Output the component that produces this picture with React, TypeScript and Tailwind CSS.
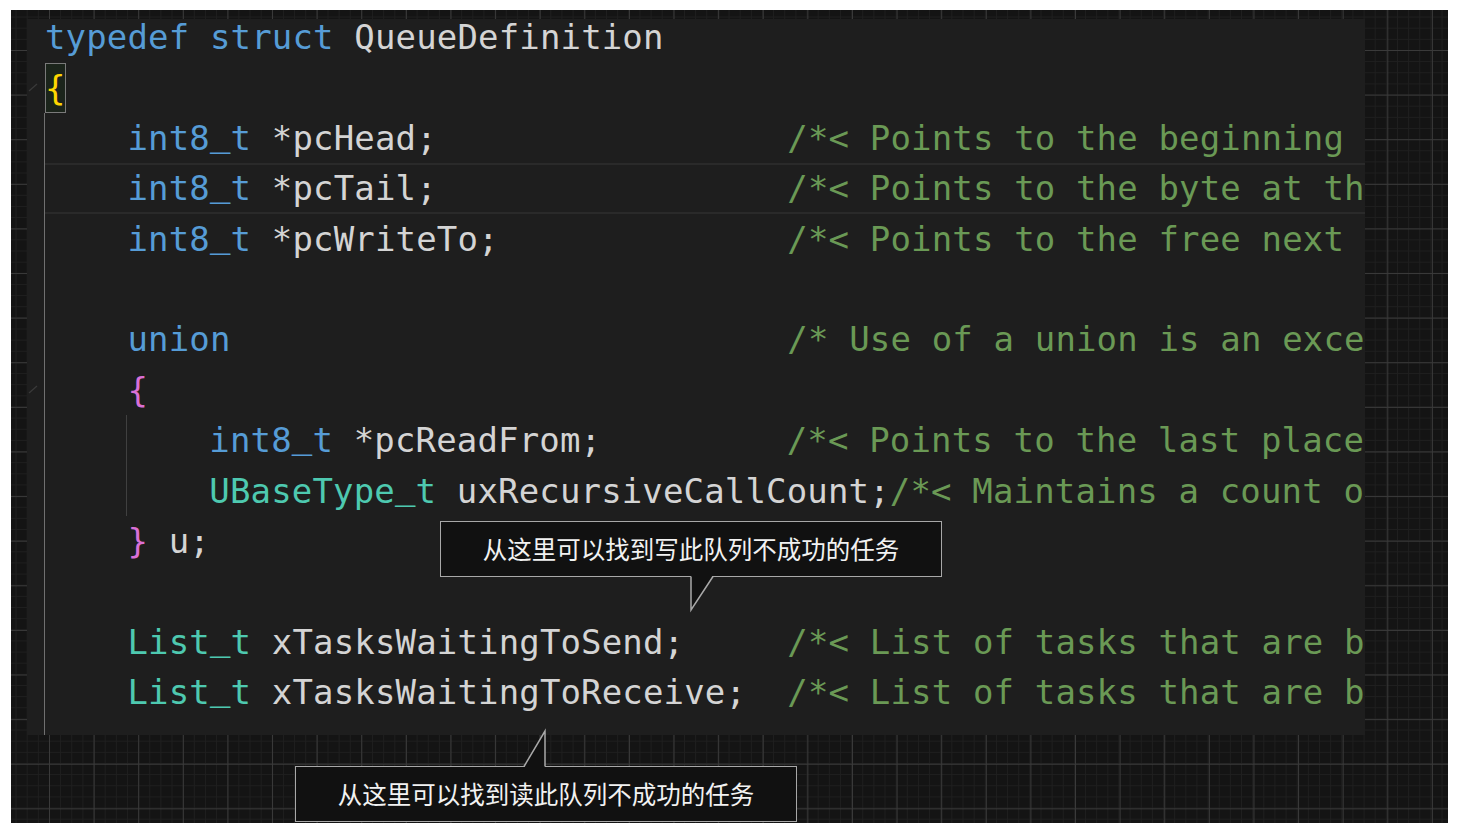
import React from "react";

type Tok = [string, string];

const KW = "text-[#569cd6]";
const TY = "text-[#4ec9b0]";
const ID = "text-[#d4d4d4]";
const CM = "text-[#6a9955]";
const PK = "text-[#da70d6]";

const pad = (s: string, col: number) => s.padEnd(col, " ");

const field = (indent: number, type: string, typeCls: string, rest: string, comment: string, col = 36): Tok[] => {
  const head = " ".repeat(indent);
  const code = head + type + rest;
  const gap = Math.max(0, col - code.length);
  return [
    [head, ID],
    [type, typeCls],
    [rest + " ".repeat(gap), ID],
    [comment, CM],
  ];
};

function Word({ text }: { text: string }) {
  const parts = text.split("_");
  return (
    <>
      {parts.map((p, i) => (
        <React.Fragment key={i}>
          {i > 0 && <span className="font-['Liberation_Mono',monospace] text-[34.1px]">_</span>}
          {p}
        </React.Fragment>
      ))}
    </>
  );
}

function Line({ toks, box = "h-[50.4px] leading-[50.4px]" }: { toks: Tok[]; box?: string }) {
  return (
    <div className={`whitespace-pre ${box}`}>
      {toks.map(([t, c], i) => (
        <span key={i} className={c}>
          <Word text={t} />
        </span>
      ))}
    </div>
  );
}

function FoldMark() {
  return (
    <svg width="10" height="9" viewBox="0 0 10 9" className="ml-[1px]">
      <path d="M1 8 L9 1" stroke="#3a3a3a" strokeWidth="1.2" fill="none" />
    </svg>
  );
}

function CodePanel() {
  return (
    <div className="ml-[16px] mt-[9px] h-[716px] w-[1338px] overflow-hidden bg-[#1e1e1e]">
      <div className="flex h-[716px] font-['DejaVu_Sans_Mono',monospace] text-[34px] tracking-[0.15px]">
        {/* gutter */}
        <div className="flex w-[18px] shrink-0 flex-col">
          <div className="h-[43.4px]" />
          <div className="flex h-[50.4px] items-center">
            <FoldMark />
          </div>
          <div className="h-[252px]" />
          <div className="flex h-[50.4px] items-center">
            <FoldMark />
          </div>
        </div>

        <div className="flex flex-1 flex-col">
          <Line
            box="h-[43.4px] leading-[36px]"
            toks={[
              ["typedef", KW],
              [" ", ID],
              ["struct", KW],
              [" ", ID],
              ["QueueDefinition", ID],
            ]}
          />
          <div className="flex h-[50.4px] items-center">
            <span className="flex h-[50px] w-[20.6px] items-center justify-center border border-[#7a7a7a] bg-[#1b241b] leading-[48px] text-[#ffd700]">
              {"{"}
            </span>
          </div>

          <div className="-ml-px flex flex-1 flex-col border-l border-[#707070]">
            <Line toks={field(4, "int8_t", KW, " *pcHead;", "/*< Points to the beginning of the queue storage area. */")} />
            <Line
              box="h-[50.4px] leading-[46.4px] border-y-2 border-[#2a2a2a]"
              toks={field(4, "int8_t", KW, " *pcTail;", "/*< Points to the byte at the end of the queue storage area. */")}
            />
            <Line toks={field(4, "int8_t", KW, " *pcWriteTo;", "/*< Points to the free next place in the storage area. */")} />
            <Line toks={[[" ", ID]]} />
            <Line
              toks={[
                [pad("    ", 4), ID],
                [pad("union", 32), KW],
                ["/* Use of a union is an exception to the coding standard to ensure two mutually exclusive structure members don't appear simultaneously. */", CM],
              ]}
            />
            <Line
              toks={[
                ["    ", ID],
                ["{", PK],
              ]}
            />
            <div className="ml-[calc(4ch-1px)] flex flex-col border-l border-[#404040]">
              <Line toks={field(4, "int8_t", KW, " *pcReadFrom;", "/*< Points to the last place that a queued item was read from. */", 32)} />
              <Line
                toks={field(4, "UBaseType_t", TY, " uxRecursiveCallCount;", "/*< Maintains a count of the number of times a recursive mutex has been taken. */", 32)}
              />
            </div>
            <Line
              toks={[
                ["    ", ID],
                ["}", PK],
                [" u;", ID],
              ]}
            />
            <Line toks={[[" ", ID]]} />
            <Line toks={field(4, "List_t", TY, " xTasksWaitingToSend;", "/*< List of tasks that are blocked waiting to post onto this queue. */")} />
            <Line toks={field(4, "List_t", TY, " xTasksWaitingToReceive;", "/*< List of tasks that are blocked waiting to read from this queue. */")} />
          </div>
        </div>
      </div>
    </div>
  );
}

function Callout({
  text,
  className,
  tail,
}: {
  text: string;
  className: string;
  tail: "down" | "up";
}) {
  return (
    <div
      className={`absolute flex h-[56px] w-[502px] items-center justify-center border-[1.5px] border-[#a8a8a8] bg-[#111111] font-['Noto_Sans_CJK_SC',sans-serif] text-[24.5px] text-[#f2f2f2] ${className}`}
    >
      {text}
      {tail === "down" ? (
        <svg width="24" height="37" viewBox="0 0 24 37" className="absolute left-[249px] top-[53px] overflow-visible">
          <polygon points="1,0 1,35 23,0" fill="#111111" />
          <polyline points="1,1.5 1,35 23,1.5" fill="none" stroke="#a8a8a8" strokeWidth="1.5" />
        </svg>
      ) : (
        <svg width="24" height="38" viewBox="0 0 24 38" className="absolute left-[227px] top-[-37.5px] overflow-visible">
          <polygon points="1,38 22,1 22,38" fill="#111111" />
          <polyline points="1,36.5 22,1 22,36.5" fill="none" stroke="#a8a8a8" strokeWidth="1.5" />
        </svg>
      )}
    </div>
  );
}

export default function App() {
  return (
    <div className="h-[830px] w-[1459px] overflow-hidden bg-white pl-[11px] pt-[10px]">
      <div className="relative h-[813px] w-[1437px] overflow-hidden bg-[#141414] bg-[linear-gradient(to_right,#3a3a3a_1px,transparent_1px),linear-gradient(to_bottom,#3a3a3a_1px,transparent_1px),linear-gradient(to_right,#1f1f1f_1px,transparent_1px),linear-gradient(to_bottom,#1f1f1f_1px,transparent_1px)] bg-[size:44.62px_44.62px,44.62px_44.62px,11.155px_11.155px,11.155px_11.155px] bg-[position:38px_40px,38px_40px,38px_40px,38px_40px]">
        <CodePanel />
        <Callout text="从这里可以找到写此队列不成功的任务" className="left-[429px] top-[511px]" tail="down" />
        <Callout text="从这里可以找到读此队列不成功的任务" className="left-[284px] top-[756px]" tail="up" />
      </div>
    </div>
  );
}
